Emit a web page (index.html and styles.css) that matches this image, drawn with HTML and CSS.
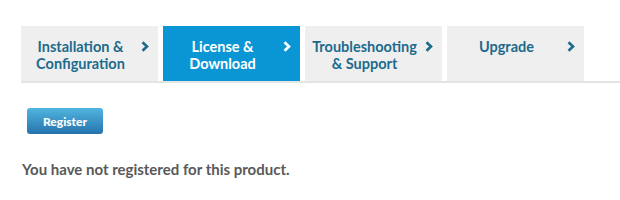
FILE: index.html
```html
<!DOCTYPE html>
<html lang="en">
<head>
    <meta charset="UTF-8">
    <meta name="viewport" content="width=device-width, initial-scale=1.0">
    <title>Product Registration</title>
    <link rel="stylesheet" href="styles.css">
</head>
<body>
    <div class="page">
        <div class="tabs">
            <a class="tab" href="#">
                <span class="tab-label">Installation &amp;<br>Configuration</span>
                <svg class="chev" width="8" height="11" viewBox="0 0 8 11"><polyline points="1.5,1.3 6,5.5 1.5,9.7" /></svg>
            </a>
            <a class="tab active" href="#">
                <span class="tab-label">License &amp;<br>Download</span>
                <svg class="chev" width="8" height="11" viewBox="0 0 8 11"><polyline points="1.5,1.3 6,5.5 1.5,9.7" /></svg>
            </a>
            <a class="tab" href="#">
                <span class="tab-label">Troubleshooting<br>&amp; Support</span>
                <svg class="chev" width="8" height="11" viewBox="0 0 8 11"><polyline points="1.5,1.3 6,5.5 1.5,9.7" /></svg>
            </a>
            <a class="tab" href="#">
                <span class="tab-label">Upgrade</span>
                <svg class="chev" width="8" height="11" viewBox="0 0 8 11"><polyline points="1.5,1.3 6,5.5 1.5,9.7" /></svg>
            </a>
        </div>

        <div class="panel">
            <button class="btn-register">Register</button>
            <p class="notice">You have not registered for this product.</p>
        </div>
    </div>
</body>
</html>
```

FILE: styles.css
```css
body {
  margin: 0;
  padding: 0;
  background: #fff;
  font-family: "Lato", "Open Sans", sans-serif;
}

.page {
  padding: 26px 0 0 21px;
}

.tabs {
  display: flex;
  gap: 5px;
  border-bottom: 2px solid #e4e4e4;
}

.tab {
  display: flex;
  align-items: flex-start;
  width: 137px;
  height: 55px;
  box-sizing: border-box;
  padding: 12px 9px 0 0;
  background: #efefef;
  color: #1d6b8c;
  text-decoration: none;
  font-size: 14.5px;
  font-weight: 700;
  line-height: 17px;
}

.tab.active {
  background: #0a96d4;
  color: #fff;
}

.tab-label {
  flex: 1;
  text-align: center;
  white-space: nowrap;
}

.chev {
  flex: none;
  margin-top: 3px;
  margin-left: 1px;
}

.chev polyline {
  fill: none;
  stroke: currentColor;
  stroke-width: 2.6;
}

.panel {
  padding-top: 25px;
}

.btn-register {
  display: block;
  margin-left: 6px;
  width: 76px;
  height: 26px;
  border: none;
  border-radius: 3px;
  background: linear-gradient(#50b5de, #2674ae);
  color: #fff;
  font-family: "Lato", sans-serif;
  font-size: 12px;
  font-weight: 900;
  cursor: pointer;
}

.notice {
  margin: 26px 0 0 1px;
  color: #595959;
  font-size: 15px;
  font-weight: 700;
}
```
